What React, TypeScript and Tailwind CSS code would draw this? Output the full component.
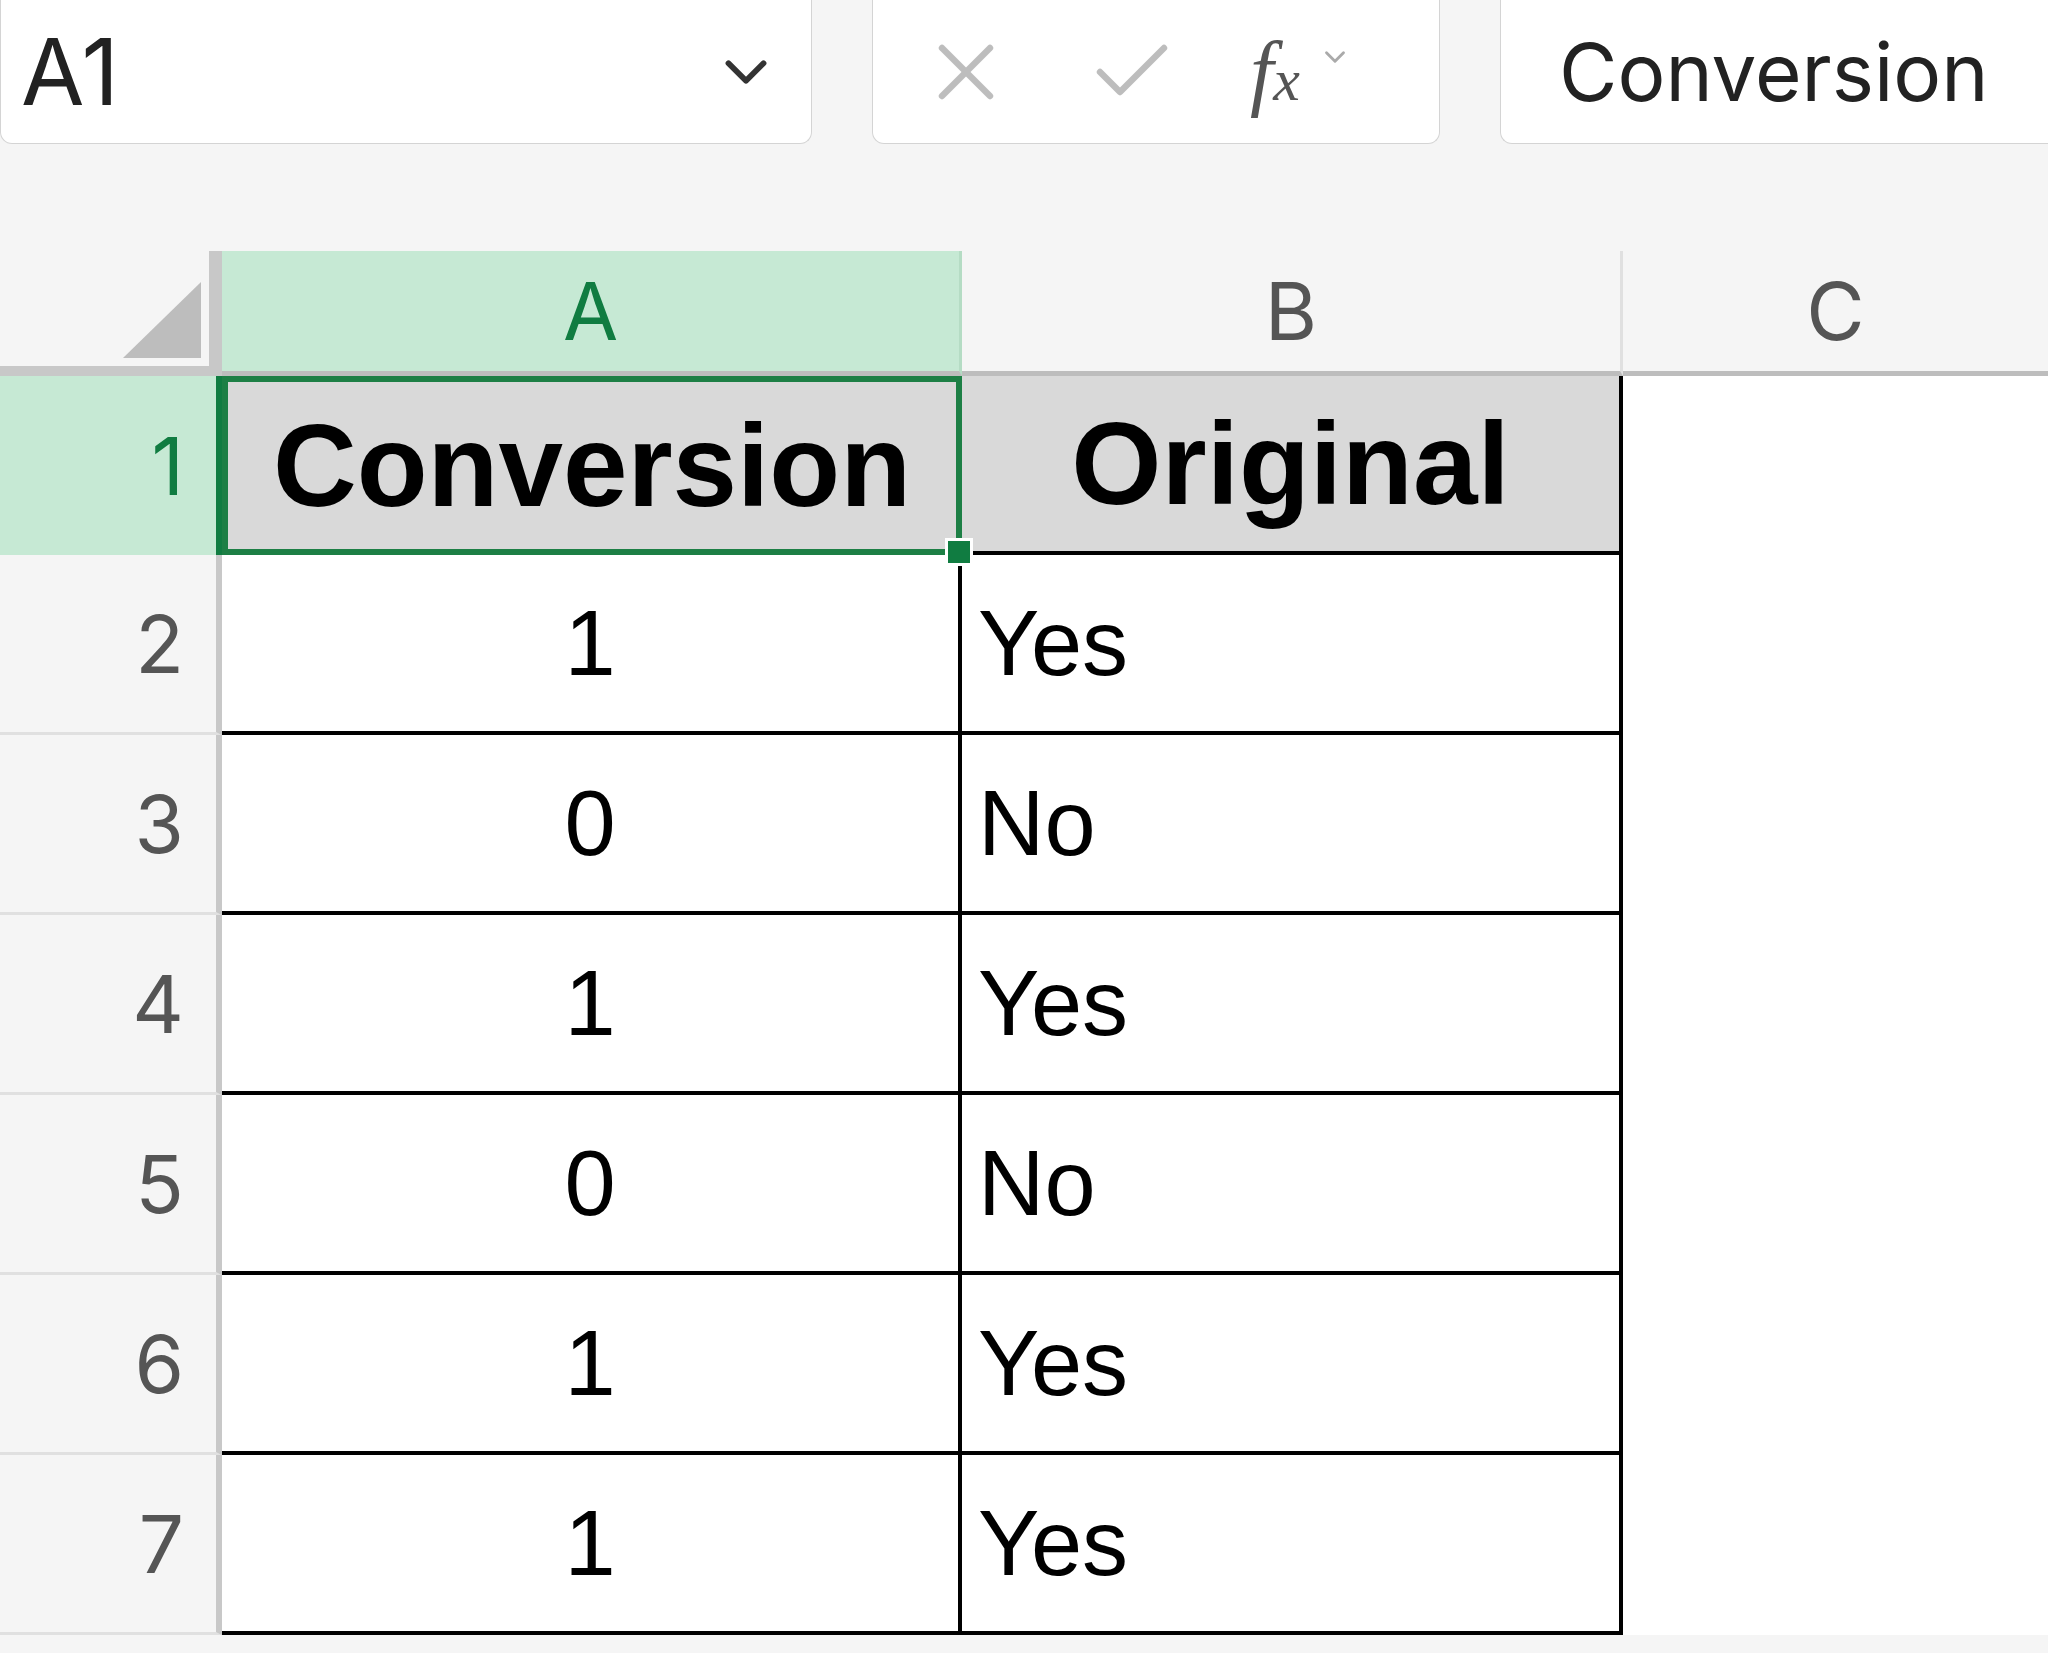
import { ChevronDown, X, Check } from 'lucide-react';

const rows = [
  ['1', 'Yes'],
  ['0', 'No'],
  ['1', 'Yes'],
  ['0', 'No'],
  ['1', 'Yes'],
  ['1', 'Yes'],
];

export default function App() {
  return (
    <div className="w-[2048px] h-[1653px] overflow-hidden bg-[#f5f5f5] font-[Liberation_Sans] text-black">
      {/* formula bar */}
      <div className="flex h-[144px] gap-[60px]">
        <div className="w-[812px] h-[144px] bg-white border border-[#d4d4d4] border-t-0 rounded-b-[12px] flex items-center justify-between pl-[20px] pr-[30px]">
          <span className="text-[92px] font-[Inter] leading-none text-[#222]">A1</span>
          <ChevronDown size={70} strokeWidth={2} className="text-[#333]" />
        </div>
        <div className="w-[568px] h-[144px] bg-white border border-[#d4d4d4] border-t-0 rounded-b-[12px] flex items-center pl-[45px] gap-[70px] text-[#bdbdbd]">
          <X size={96} strokeWidth={1.6} />
          <Check size={96} strokeWidth={1.6} />
          <span className="flex items-end gap-[18px]">
            <span className="font-[Liberation_Serif] italic text-[84px] text-[#555] leading-none">f<span className="text-[60px]">x</span></span>
            <ChevronDown size={34} className="text-[#aaa] mb-[40px]" />
          </span>
        </div>
        <div className="flex-1 h-[144px] bg-white border border-[#d4d4d4] border-t-0 border-r-0 rounded-bl-[12px] flex items-center pl-[58px]">
          <span className="text-[80px] font-[Inter] text-[#222] leading-none">Conversion</span>
        </div>
      </div>
      <div className="h-[107px]" />
      {/* grid */}
      <div className="grid grid-cols-[222px_740px_661px_1fr] grid-rows-[125px_179px_repeat(6,180px)_1fr]">
        <div className="relative bg-[#f5f5f5] border-r-[13px] border-[#c8c8c8] border-b-[10px]">
          <div className="absolute right-[8px] bottom-[8px] w-0 h-0 border-l-[78px] border-l-transparent border-b-[76px] border-b-[#bdbdbd]" />
        </div>
        <div className="bg-[#c6e9d4] border-b-[5px] border-[#bdbdbd] border-r-[3px] border-r-[#b5dcc4] flex items-center justify-center text-[80px] text-[#107c41] font-[Inter]">A</div>
        <div className="bg-[#f5f5f5] border-b-[5px] border-[#bdbdbd] border-r-[3px] border-r-[#e0e0e0] flex items-center justify-center text-[80px] text-[#555] font-[Inter]">B</div>
        <div className="bg-[#f5f5f5] border-b-[5px] border-[#bdbdbd] flex items-center justify-center text-[80px] text-[#555] font-[Inter]">C</div>
        {/* row 1 */}
        <div className="bg-[#c6e9d4] border-r-[6px] border-[#107c41] flex items-center justify-end pr-[32px] text-[80px] text-[#107c41] font-[Inter]">1</div>
        <div className="relative bg-[#d9d9d9] border-[6px] border-[#1d7f45] flex items-center justify-center text-[116px] font-bold">
          Conversion
          <div className="absolute -right-[17px] -bottom-[17px] w-[28px] h-[28px] bg-[#107c41] border-[3px] border-white" />
        </div>
        <div className="bg-[#d9d9d9] border-r-[4px] border-b-[4px] border-black flex items-center justify-center text-[116px] font-bold">Original</div>
        <div className="bg-white" />
        {rows.map(([a, b], i) => (
          <div key={i} className="contents">
            <div className="bg-[#f5f5f5] border-r-[6px] border-[#c8c8c8] border-b-[3px] border-b-[#e0e0e0] flex items-center justify-end pr-[32px] text-[80px] text-[#555] font-[Inter]">{i + 2}</div>
            <div className="bg-white border-r-[4px] border-b-[4px] border-black flex items-center justify-center text-[92px]">{a}</div>
            <div className="bg-white border-r-[4px] border-b-[4px] border-black flex items-center pl-[16px] text-[92px]">{b}</div>
            <div className="bg-white" />
          </div>
        ))}
        <div className="bg-[#f5f5f5] border-r-[6px] border-[#c8c8c8]" />
        <div className="bg-white" />
        <div className="bg-white" />
        <div className="bg-white" />
      </div>
    </div>
  );
}
